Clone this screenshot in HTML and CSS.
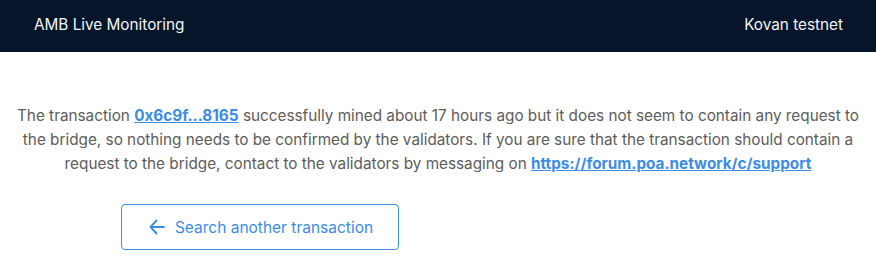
FILE: index.html
```html
<!DOCTYPE html>
<html>
<head>
<meta charset="utf-8">
<link rel="stylesheet" href="styles.css">
</head>
<body>
<header class="header">
  <span class="brand">AMB Live Monitoring</span>
  <span class="network">Kovan testnet</span>
</header>
<main class="main">
  <p class="message">The transaction <a class="link" href="#">0x6c9f...8165</a> successfully mined about 17 hours ago but it does not seem to contain any request to the bridge, so nothing needs to be confirmed by the validators. If you are sure that the transaction should contain a request to the bridge, contact to the validators by messaging on <a class="link" href="#">https://forum.poa.network/c/support</a></p>
  <div class="actions">
    <button class="back-btn">
      <svg class="arrow" width="16" height="16" viewBox="0 0 16 16" fill="none" stroke="currentColor" stroke-width="1.9" stroke-linecap="round" stroke-linejoin="round"><path d="M15 8H1.5M7.5 1.5L1.5 8L7.5 14.5"/></svg>
      <span>Search another transaction</span>
    </button>
  </div>
</main>
</body>
</html>
```
FILE: styles.css
```css
* { box-sizing: border-box; }
html, body { margin: 0; padding: 0; background: #fff; }
body { font-family: Inter, "Noto Sans", sans-serif; }
.header {
  height: 52px;
  background: #061529;
  color: #f2f4f7;
  display: flex;
  justify-content: space-between;
  align-items: center;
  padding: 0 33px 4px 34px;
  font-size: 15.3px;
}
.main { padding: 0 10px; }
.message {
  margin: 52px 0 0;
  text-align: center;
  color: #5c5c5c;
  font-size: 15.3px;
  line-height: 24px;
}
.link { color: #3c8ce6; font-weight: 700; text-decoration: underline; }
.actions { padding-left: 111px; margin-top: 28px; }
.back-btn {
  width: 278px;
  height: 46px;
  border: 1px solid #3c8ce6;
  border-radius: 4px;
  background: #fff;
  color: #3c8ce6;
  font-family: inherit;
  font-size: 15.5px;
  display: flex;
  align-items: center;
  justify-content: center;
  gap: 10px;
  padding: 0 0 0 2px;
}
.arrow { display: block; }
```
